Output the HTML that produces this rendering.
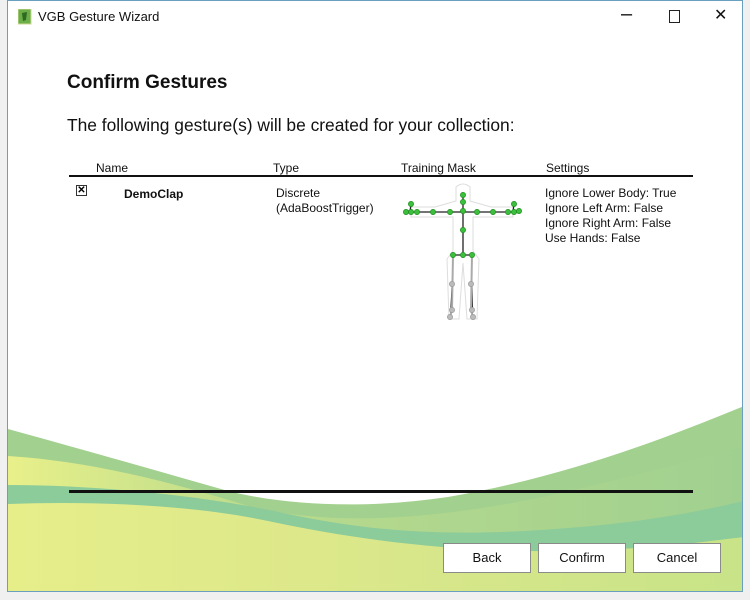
<!DOCTYPE html>
<html><head><meta charset="utf-8"><style>
body{margin:0;width:750px;height:600px;background:#f0f0f0;position:relative;overflow:hidden;font-family:"Liberation Sans",sans-serif;}
.win{position:absolute;left:7px;top:0;width:736px;height:592px;background:#fff;border:1px solid #6a9fc0;box-sizing:border-box;overflow:hidden}
.t{position:absolute;white-space:nowrap;color:#111}
.btn{position:absolute;top:542px;width:88px;height:30px;background:#fff;border:1px solid #8a8a8a;box-sizing:border-box;font-size:13px;text-align:center;line-height:28px;color:#111}
</style></head><body>
<div class="win">
<svg style="position:absolute;left:0;top:0" width="736" height="592">
<defs>
<linearGradient id="g1" x1="0" x2="1"><stop offset="0" stop-color="#e6ee8a"/><stop offset=".4" stop-color="#dde88a"/><stop offset="1" stop-color="#c8e388"/></linearGradient>
<linearGradient id="gy" x1="0" x2="1"><stop offset="0" stop-color="#e8f08a"/><stop offset=".35" stop-color="#b8da8c"/><stop offset="1" stop-color="#a0d090"/></linearGradient>
</defs>
<path d="M0 428 C80 450 150 470 220 490 C280 505 360 508 440 496 C560 475 650 440 736 405 L736 592 L0 592Z" fill="#a2d08e"/>
<path d="M0 455 C80 460 160 480 240 505 C320 525 420 520 540 495 C640 472 700 455 736 445 L736 592 L0 592Z" fill="url(#gy)"/>
<path d="M0 484 C90 484 200 495 280 513 C360 530 440 537 560 527 C650 520 700 508 736 500 L736 592 L0 592Z" fill="#8ccb9a"/>
<path d="M0 503 C80 500 180 503 260 520 C340 537 440 552 560 550 C650 548 700 540 736 536 L736 592 L0 592Z" fill="url(#g1)"/>
</svg>
<svg style="position:absolute;left:10px;top:8px" width="14" height="16"><rect x="0" y="0" width="13" height="15" fill="#6cae48" stroke="#c9d890"/><path d="M4 4 L9 3 L8 11 L5 12Z" fill="#2e6a20"/></svg>
<div class="t" style="left:30px;top:8px;font-size:13px">VGB Gesture Wizard</div>
<div class="t" style="left:613px;top:2px;font-size:20px;font-weight:300">&#8211;</div>
<div style="position:absolute;left:661px;top:9px;width:9px;height:11px;border:1px solid #222"></div>
<div class="t" style="left:706px;top:4px;font-size:16px">✕</div>
<div class="t" style="left:59px;top:71px;font-size:19px;font-weight:bold">Confirm Gestures</div>
<div class="t" style="left:59px;top:114px;font-size:17.4px">The following gesture(s) will be created for your collection:</div>
<div class="t" style="left:88px;top:160px;font-size:12px">Name</div>
<div class="t" style="left:265px;top:160px;font-size:12px">Type</div>
<div class="t" style="left:393px;top:160px;font-size:12px">Training Mask</div>
<div class="t" style="left:538px;top:160px;font-size:12px">Settings</div>
<div style="position:absolute;left:61px;top:174px;width:624px;height:2px;background:#111"></div>
<div style="position:absolute;left:68px;top:184px;width:11px;height:11px;border:1px solid #333;box-sizing:border-box;font-size:10px;line-height:9px;text-align:center;font-weight:bold">✕</div>
<div class="t" style="left:116px;top:186px;font-size:12px;font-weight:bold">DemoClap</div>
<div class="t" style="left:268px;top:185px;font-size:12px;line-height:15px">Discrete<br>(AdaBoostTrigger)</div>
<div class="t" style="left:537px;top:185px;font-size:12px;line-height:15px">Ignore Lower Body: True<br>Ignore Left Arm: False<br>Ignore Right Arm: False<br>Use Hands: False</div>
<svg style="position:absolute;left:-7px;top:0" width="750" height="600">
<g fill="none" stroke="#ddd" stroke-width="1"><path d="M455 186 Q462 180 469 186 L469 200 L490 206 L512 206 L512 216 L472 216 L472 250 L478 258 L476 318 L466 318 L462 262 L458 318 L448 318 L446 258 L452 250 L452 216 L410 216 L410 206 L434 206 L455 200Z"/></g>
<g stroke="#aaa" stroke-width="2"><path d="M452 254 L451 309 L449 316 M471 254 L470 309 L472 316"/></g>
<g stroke="#222" stroke-width="1.3"><path d="M405 211 L518 211 M462 194 L462 254 M452 254 L471 254 M410 203 L409 211 M513 203 L512 211"/></g>
<g fill="#3cbf3c" stroke="#1c8c1c" stroke-width=".7">
<circle cx="462" cy="194" r="2.6"/><circle cx="462" cy="201" r="2.6"/><circle cx="462" cy="210" r="2.6"/><circle cx="462" cy="229" r="2.6"/><circle cx="462" cy="254" r="2.6"/><circle cx="452" cy="254" r="2.6"/><circle cx="471" cy="254" r="2.6"/>
<circle cx="449" cy="211" r="2.6"/><circle cx="476" cy="211" r="2.6"/><circle cx="432" cy="211" r="2.6"/><circle cx="492" cy="211" r="2.6"/><circle cx="416" cy="211" r="2.6"/><circle cx="507" cy="211" r="2.6"/><circle cx="410" cy="211" r="2.6"/><circle cx="405" cy="211" r="2.6"/><circle cx="410" cy="203" r="2.6"/><circle cx="513" cy="211" r="2.6"/><circle cx="518" cy="210" r="2.6"/><circle cx="513" cy="203" r="2.6"/></g>
<g fill="#bbb" stroke="#999" stroke-width=".7"><circle cx="451" cy="283" r="2.6"/><circle cx="470" cy="283" r="2.6"/><circle cx="451" cy="309" r="2.6"/><circle cx="471" cy="309" r="2.6"/><circle cx="449" cy="316" r="2.6"/><circle cx="472" cy="316" r="2.6"/></g>
</svg>
<div style="position:absolute;left:61px;top:489px;width:624px;height:3px;background:#111"></div>
<div class="btn" style="left:435px">Back</div>
<div class="btn" style="left:530px">Confirm</div>
<div class="btn" style="left:625px">Cancel</div>
</div>
</body></html>
